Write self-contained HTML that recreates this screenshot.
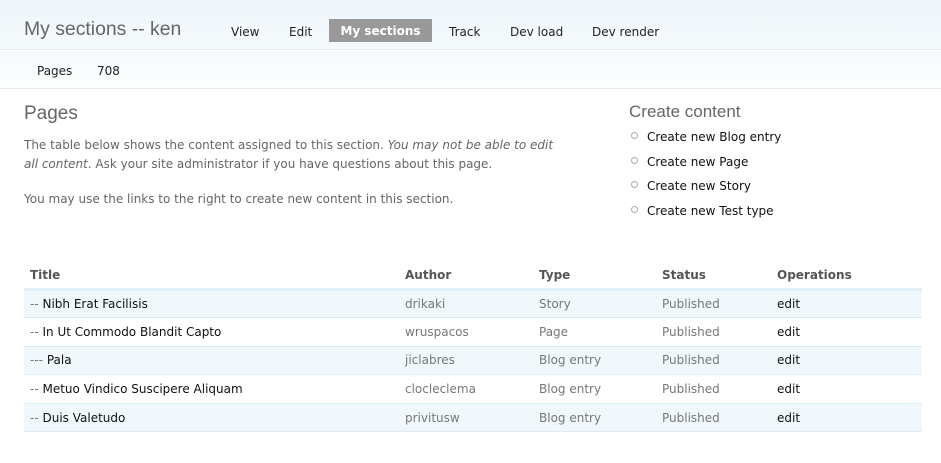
<!DOCTYPE html>
<html><head><meta charset="utf-8"><style>
*{margin:0;padding:0;box-sizing:border-box}
body{width:941px;height:463px;background:#fff;font-family:"DejaVu Sans",Verdana,sans-serif;position:relative;overflow:hidden;color:#666}
.a{position:absolute;white-space:nowrap}
#hd{position:absolute;left:0;top:0;width:941px;height:50px;background:linear-gradient(#eef6fa,#f5fafc);border-bottom:1px solid #e3eef3}
#sub{position:absolute;left:0;top:51px;width:941px;height:38px;background:linear-gradient(#f5fafc,#fdfeff);border-bottom:1px solid #e3eef3}
.tab{font-size:12px;color:#222;top:25px}
.h{font-family:"Liberation Sans",Arial,sans-serif;color:#666}
p.a{font-size:12px;color:#666}
.li{font-size:12px;color:#111;left:647px}
.bul{position:absolute;left:631px;width:7px;height:7px;border:1px solid #aaa;border-radius:50%}
table{position:absolute;left:24px;top:263px;width:898px;border-collapse:collapse;font-size:12px}
th{text-align:left;font-weight:bold;color:#555;height:26px;padding-left:6px;border-bottom:3px solid #e0f0f6;vertical-align:middle}
td{height:28.6px;padding-left:6px;border-bottom:1px solid #dcedf4;color:#777}
tr:nth-child(even) td{background:#f1f8fb}
td.t,td.e{color:#111}
</style></head><body>
<div id="hd"></div><div id="sub"></div>
<div class="a h" style="left:24px;top:18px;font-size:19.4px">My sections -- ken</div>
<div class="a tab" style="left:231px">View</div>
<div class="a tab" style="left:289px">Edit</div>
<div class="a" style="left:329px;top:19px;width:103px;height:23px;background:#999;color:#fff;font-weight:bold;font-size:12px;text-align:center;line-height:25px">My sections</div>
<div class="a tab" style="left:449px">Track</div>
<div class="a tab" style="left:510px">Dev load</div>
<div class="a tab" style="left:592px">Dev render</div>
<div class="a" style="left:37px;top:64px;font-size:12px;color:#222">Pages</div>
<div class="a" style="left:97px;top:64px;font-size:12px;color:#222">708</div>
<div class="a h" style="left:24px;top:103px;font-size:19px">Pages</div>
<p class="a" style="left:24px;top:138px">The table below shows the content assigned to this section. <i>You may not be able to edit</i></p>
<p class="a" style="left:24px;top:157px"><i>all content</i>. Ask your site administrator if you have questions about this page.</p>
<p class="a" style="left:24px;top:192px">You may use the links to the right to create new content in this section.</p>
<div class="a h" style="left:629px;top:102px;font-size:17px">Create content</div>
<div class="bul" style="top:132px"></div><div class="a li" style="top:130px">Create new Blog entry</div>
<div class="bul" style="top:157px"></div><div class="a li" style="top:155px">Create new Page</div>
<div class="bul" style="top:181px"></div><div class="a li" style="top:179px">Create new Story</div>
<div class="bul" style="top:206px"></div><div class="a li" style="top:204px">Create new Test type</div>
<table>
<tr><th style="width:375px">Title</th><th style="width:134px">Author</th><th style="width:123px">Type</th><th style="width:115px">Status</th><th>Operations</th></tr>
<tr><td class="t"><span style="color:#777">--</span> Nibh Erat Facilisis</td><td>drikaki</td><td>Story</td><td>Published</td><td class="e">edit</td></tr>
<tr><td class="t"><span style="color:#777">--</span> In Ut Commodo Blandit Capto</td><td>wruspacos</td><td>Page</td><td>Published</td><td class="e">edit</td></tr>
<tr><td class="t"><span style="color:#777">---</span> Pala</td><td>jiclabres</td><td>Blog entry</td><td>Published</td><td class="e">edit</td></tr>
<tr><td class="t"><span style="color:#777">--</span> Metuo Vindico Suscipere Aliquam</td><td>clocleclema</td><td>Blog entry</td><td>Published</td><td class="e">edit</td></tr>
<tr><td class="t"><span style="color:#777">--</span> Duis Valetudo</td><td>privitusw</td><td>Blog entry</td><td>Published</td><td class="e">edit</td></tr>
</table>
</body></html>
